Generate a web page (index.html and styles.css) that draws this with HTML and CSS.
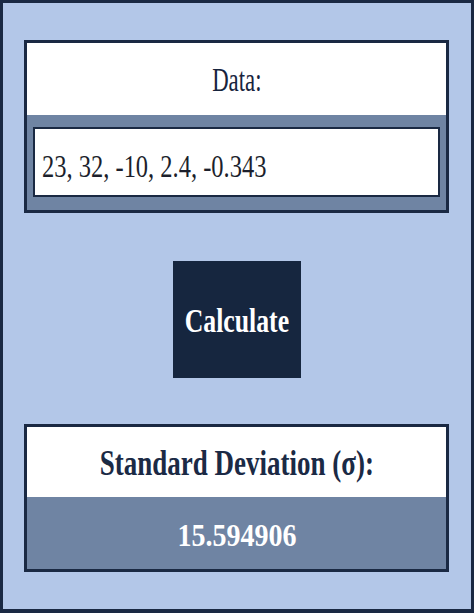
FILE: index.html
```html
<!DOCTYPE html>
<html lang="en">
<head>
    <meta charset="UTF-8">
    <meta name="viewport" content="width=device-width, initial-scale=1.0">
    <title>Standard Deviation</title>
    <link rel="stylesheet" href="styles.css">
</head>
<body>
    <div class="app">
        <div class="card">
            <div class="card-head">
                <span class="squeeze label">Data:</span>
            </div>
            <div class="card-body">
                <div class="field">
                    <span class="squeeze entry">23, 32, -10, 2.4, -0.343</span>
                </div>
            </div>
        </div>

        <button class="calc">
            <span class="squeeze">Calculate</span>
        </button>

        <div class="card">
            <div class="card-head result-head">
                <span class="squeeze title">Standard Deviation (σ):</span>
            </div>
            <div class="card-body result">
                <span class="squeeze value">15.594906</span>
            </div>
        </div>
    </div>
</body>
</html>
```

FILE: styles.css
```css
*{
    margin: 0;
    padding: 0;
    box-sizing: border-box;
}

body{
    font-family: "Liberation Serif", "Times New Roman", serif;
    color: #1b2a45;
}

.app{
    height: 613px;
    border: 3px solid #1a2943;
    border-bottom-width: 4px;
    background: #b3c7e8;
    padding: 37px 22px 37px 21px;
    display: flex;
    flex-direction: column;
    align-items: flex-start;
}

/* georgia-ish narrow serif look */
.squeeze{
    display: inline-block;
    white-space: nowrap;
}

.card{
    width: 425px;
    border: 3px solid #1a2943;
    background: #6f84a3;
}

.card-head{
    height: 72px;
    background: #fff;
    display: flex;
    justify-content: center;
    align-items: center;
}

.label{
    font-size: 34px;
    line-height: 1;
    color: #17243d;
    transform: scaleX(0.67);
    margin-top: 2px;
}

.card-body{
    padding: 12px 6px 13px;
}

.field{
    height: 70px;
    background: #fff;
    border: 2px solid #1a2943;
    display: flex;
    align-items: center;
    padding: 8px 0 0 7px;
}

.entry{
    font-size: 31px;
    line-height: 1;
    color: #1c1f2c;
    transform: scaleX(0.79);
    transform-origin: left center;
}

.calc{
    align-self: center;
    width: 128px;
    height: 117px;
    margin: 48px 0 46px;
    padding: 0;
    border: none;
    background: #16263f;
    color: #fff;
    font-family: "Liberation Serif", "Times New Roman", serif;
    font-weight: bold;
    font-size: 33px;
    line-height: 1;
    display: flex;
    justify-content: center;
    align-items: center;
    cursor: pointer;
}

.calc .squeeze{
    transform: scaleX(0.78);
    margin-top: 4px;
}

.result-head{
    height: 70px;
}

.title{
    font-size: 36px;
    font-weight: bold;
    line-height: 1;
    transform: scaleX(0.75);
    margin-top: 1px;
}

.result{
    height: 72px;
    padding: 0;
    display: flex;
    justify-content: center;
    align-items: center;
}

.value{
    font-size: 32px;
    font-weight: bold;
    line-height: 1;
    color: #fff;
    transform: scaleX(0.875);
    margin-top: 4px;
}
```
